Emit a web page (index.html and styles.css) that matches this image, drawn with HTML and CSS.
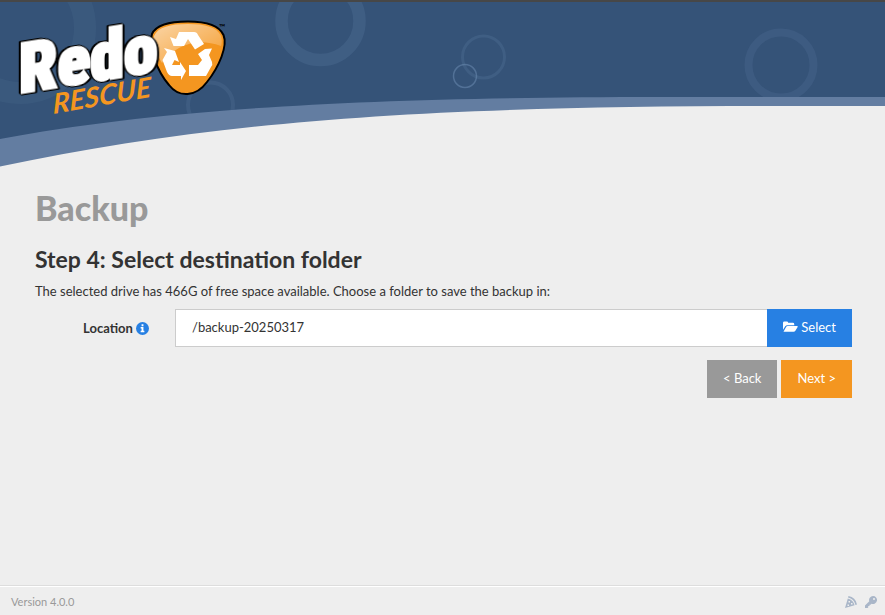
FILE: index.html
```
<!DOCTYPE html>
<html lang="en">
<head>
  <meta charset="utf-8">
  <meta name="viewport" content="width=device-width, initial-scale=1">
  <title>Redo Rescue</title>
  <link rel="stylesheet" href="styles.css">
</head>
<body>
  <header class="header">
    <svg class="swoosh" viewBox="0 0 885 170" preserveAspectRatio="xMidYMin slice" aria-hidden="true">
      <path fill="#637da1" d="M0 0H885V106H770C420 106 210 122 0 166.5Z"/>
      <clipPath id="sky"><path d="M0 0H885V97H660C360 97 160 109 0 139Z"/></clipPath>
      <g clip-path="url(#sky)">
        <rect width="885" height="170" fill="#355378"/>
        <g fill="none" stroke="#6f90b5">
          <circle cx="20" cy="28" r="65" stroke-width="22" opacity=".1"/>
          <circle cx="320.5" cy="21" r="39" stroke-width="12.5" opacity=".18"/>
          <circle cx="210.5" cy="105" r="22.5" stroke-width="4" opacity=".16"/>
          <circle cx="483.5" cy="57" r="21" stroke-width="3" opacity=".18"/>
          <circle cx="465" cy="76" r="11.5" stroke-width="1.5" opacity=".5"/>
          <circle cx="781" cy="65" r="32.5" stroke-width="8" opacity=".14"/>
        </g>
        <rect width="885" height="2" fill="#474747"/>
      </g>
    </svg>
    <svg class="logo" viewBox="0 0 240 125" role="img" aria-label="Redo Rescue">
      <defs>
        <linearGradient id="shine" x1="0" y1="0" x2="1" y2="1">
          <stop offset="0" stop-color="#fff" stop-opacity=".6"/>
          <stop offset="1" stop-color="#fff" stop-opacity=".08"/>
        </linearGradient>
      </defs>
      <path class="badge" d="M152 34C156 25 170 21.5 188 21.5C206 21.5 219 25 223.500 35C228 46 219 67 207 82C196 97 179 98 169 85C157 71 148 47 152 34Z"/>
      <path fill="url(#shine)" d="M154 36C158 27 170 24 188 24C205 24 217 27 221 36C222 40 222 43 221 46C196 37 176 45 162 63C156 53 152 43 154 36Z"/>
      <g fill="#fff">
        <path d="M179 32H194Q197 32 198 35L204 44L195 49.500L188 39L184 46H173.500L170 37L176 39Z"/>
        <path d="M198 54L205 49L212 48.500L209 55L212 62Q213 65 211 67L206 76H189V65H198L202 60Z"/>
        <path d="M164 48L175 51L179 62L174.500 60L172 65H180V62L186 71L181 80V76H172Q169 76 167 72L162.500 60L167 52Z"/>
      </g>
      <text class="logo-name" transform="translate(19 93) skewY(-9)">Redo</text>
      <text class="logo-sub" transform="translate(53 114) skewY(-10)">RESCUE</text>
      <text class="logo-tm" x="219" y="30">™</text>
    </svg>
  </header>

  <main class="content">
    <h1>Backup</h1>
    <h2>Step 4: Select destination folder</h2>
    <p>The selected drive has 466G of free space available. Choose a folder to save the backup in:</p>

    <form>
      <div class="form-row">
        <label for="location">Location
          <svg class="icon-info" viewBox="0 0 14 14" aria-hidden="true">
            <circle cx="7" cy="7" r="7" fill="#2780e3"/>
            <path fill="#fff" d="M6 2.5H8V4.5H6ZM5 5.5H8V9.5H9V11H5V9.5H6V7H5Z"/>
          </svg>
        </label>
        <div class="input-group">
          <input type="text" id="location" value="/backup-20250317">
          <button type="button" class="btn btn-primary">
            <svg class="icon-folder" viewBox="0 0 16 12" aria-hidden="true">
              <path fill="#fff" d="M0 9V1.5Q0 0 1.5 0H4Q5.5 0 5.5 1.5H10.5Q12 1.5 12 3V4H4.5Q3.2 4 2.4 5.2ZM.5 11L3.3 6Q3.8 5 5 5H15Q16.2 5 15.6 6L13.2 10Q12.5 11 11.3 11Z"/>
            </svg>
            Select</button>
        </div>
      </div>
      <div class="buttons">
        <button type="button" class="btn btn-default">&lt; Back</button>
        <button type="submit" class="btn btn-warning">Next &gt;</button>
      </div>
    </form>
  </main>

  <footer class="footer">
    <span>Version 4.0.0</span>
    <nav class="tools">
      <a href="#" aria-label="Log">
        <svg viewBox="0 0 12 12" aria-hidden="true">
          <path fill="#a9b6c8" d="M3.5 0Q10.5 1 12 8.5L10.5 9Q9 3 3 1.6ZM2.8 2.5Q8.5 4 9.6 9.3L0 12Z"/>
          <path fill="#eee" d="M3.5 5h1.5v1.5h-1.5zM6 7h1.5v1.5h-1.5zM2.5 8.5h1.5v1.5h-1.5z"/>
        </svg>
      </a>
      <a href="#" aria-label="Password">
        <svg viewBox="0 0 12 12" aria-hidden="true">
          <path fill="#a9b6c8" fill-rule="evenodd" d="M8 0A4 4 0 1 1 6.5 7.7L5.5 8.7H4.5V10H3.2V11.5L2.5 12H0V9.6L4.3 5.3A4 4 0 0 1 8 0ZM9 2A1 1 0 1 0 9 4A1 1 0 0 0 9 2Z"/>
        </svg>
      </a>
    </nav>
  </footer>
</body>
</html>
```
FILE: styles.css
```
* {
  box-sizing: border-box;
}

body {
  margin: 0;
  min-height: 100vh;
  display: flex;
  flex-direction: column;
  background: #eee;
  color: #333;
  font-family: Lato, sans-serif;
  font-size: 13px;
  line-height: 20px;
}

.header {
  display: grid;
}

.swoosh, .logo {
  grid-area: 1 / 1;
}

.swoosh {
  width: 100%;
  height: 170px;
}

.logo {
  width: 240px;
  height: 125px;
}

.badge {
  fill: #f49620;
  stroke: #000;
  stroke-width: 2;
}

.logo-name {
  font: 900 68px "Liberation Sans Narrow", "Roboto Condensed", "Open Sans Condensed", Lato, sans-serif;
  fill: #fff;
  stroke: #fff;
  stroke-width: 3;
  filter: drop-shadow(1px 1px #000) drop-shadow(-1px -1px #000) drop-shadow(1px 0 #000) drop-shadow(-1px 0 #000);
}

.logo-sub {
  font: italic 700 28px Lato, sans-serif;
  fill: #f49620;
}

.logo-tm {
  font: 700 8px Lato, sans-serif;
}

.content {
  flex: 1;
  padding: 17px 33px 20px 35px;
}

h1 {
  margin: 0 0 16px;
  color: #999;
  font-size: 34px;
  font-weight: 900;
  line-height: 42px;
}

h2 {
  margin: 0 0 8px;
  font-size: 23px;
  font-weight: 700;
  line-height: 28px;
}

p {
  margin: 0 0 8px;
}

.form-row {
  display: grid;
  grid-template-columns: 114px 1fr;
  gap: 26px;
  align-items: center;
  margin-bottom: 13px;
}

label {
  font-weight: 700;
  text-align: right;
  white-space: nowrap;
}

.icon-info {
  width: 13px;
  height: 13px;
  vertical-align: -2px;
}

.icon-folder {
  width: 15px;
  height: 12px;
  vertical-align: -1px;
}

.input-group {
  display: flex;
}

input {
  flex: 1;
  min-width: 0;
  height: 38px;
  padding: 0 16px 2px;
  border: 1px solid #ccc;
  border-right: 0;
  background: #fff;
  color: #333;
  font: inherit;
}

.btn {
  height: 38px;
  padding: 0 15px 2px;
  border: 1px solid transparent;
  color: #fff;
  font: inherit;
  cursor: pointer;
}

.btn-primary {
  background: #2780e3;
}

.btn-default {
  background: #999;
}

.btn-warning {
  background: #f49620;
}

.buttons {
  display: flex;
  justify-content: flex-end;
  gap: 4px;
}

.footer {
  display: flex;
  justify-content: space-between;
  align-items: center;
  height: 30px;
  padding: 3px 8px 0 11px;
  border-top: 1px solid #ddd;
  box-shadow: inset 0 1px #fff;
  color: #999;
  font-size: 11px;
}

.tools {
  display: flex;
  gap: 8px;
}

.tools svg {
  display: block;
  width: 12px;
  height: 12px;
}
```
